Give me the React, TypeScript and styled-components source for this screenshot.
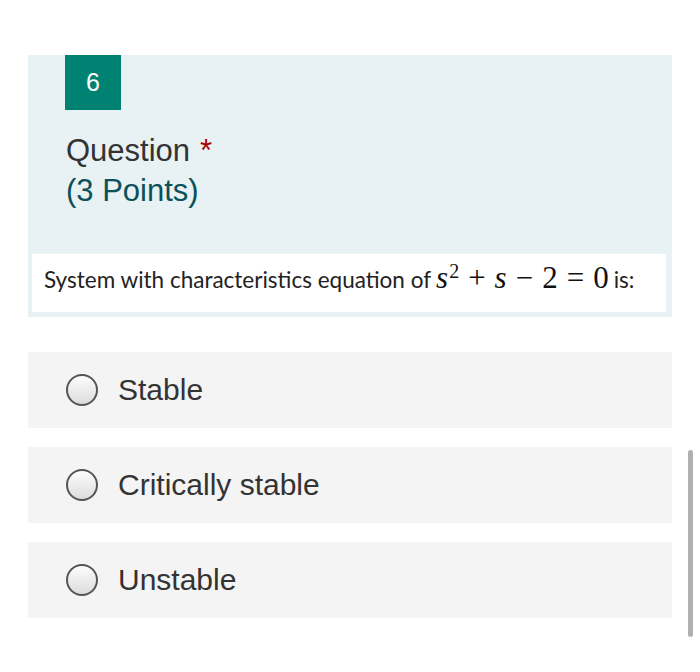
import React from "react";
import styled, { createGlobalStyle } from "styled-components";

const Global = createGlobalStyle`
  html, body { margin: 0; padding: 0; background: #ffffff; }
  body { font-family: "Liberation Sans", Arial, sans-serif; }
`;

const Page = styled.div`
  position: relative;
  width: 700px;
  height: 672px;
  padding: 55px 28px 0 28px;
  box-sizing: border-box;
  display: flex;
  flex-direction: column;
`;

const Header = styled.div`
  background: #e8f1f3;
  display: flex;
  flex-direction: column;
  padding: 0 6px 5px 4px;
`;

const Badge = styled.div`
  width: 56px;
  height: 55px;
  margin-left: 33px;
  background: #008272;
  color: #ffffff;
  font-size: 25px;
  display: flex;
  align-items: center;
  justify-content: center;
`;

const Title = styled.div`
  margin: 21px 0 0 34px;
  font-size: 31px;
  line-height: 40px;
  color: #333333;
`;

const Star = styled.span`
  color: #a80000;
  margin-left: 10px;
`;

const Points = styled.div`
  margin-left: 34px;
  font-size: 31px;
  line-height: 40px;
  color: #0b5159;
`;

const Prompt = styled.div`
  margin-top: 43px;
  height: 58px;
  background: #ffffff;
  display: flex;
  align-items: center;
  padding: 0 0 8px 12px;
  box-sizing: border-box;
  font-family: Lato, "Open Sans", sans-serif;
  font-size: 22.5px;
  color: #222222;
`;

const Math = styled.span`
  font-family: "Liberation Serif", "DejaVu Serif", serif;
  font-size: 31px;
  margin: -3px 5px 0 5px;
  color: #111111;
`;

const Var = styled.i`
  font-style: italic;
`;

const Sup = styled.sup`
  font-size: 20px;
  vertical-align: 10px;
  line-height: 0;
  margin-left: 1px;
`;

const Op = styled.span`
  margin: 0 9px;
`;

const Options = styled.div`
  margin-top: 35px;
  display: flex;
  flex-direction: column;
  gap: 19px;
`;

const Option = styled.label`
  height: 76px;
  background: #f4f4f4;
  display: flex;
  align-items: center;
  padding-left: 38px;
  gap: 20px;
  font-size: 30px;
  color: #333333;
`;

const Radio = styled.span`
  width: 28px;
  height: 28px;
  border-radius: 50%;
  border: 2px solid #555555;
  background: linear-gradient(#fdfdfd, #dcdcdc);
  flex: none;
`;

const Scrollbar = styled.div`
  position: absolute;
  left: 688px;
  top: 450px;
  width: 5px;
  height: 187px;
  border-radius: 3px;
  background: #b0b0b0;
`;

export default function App() {
  const options = ["Stable", "Critically stable", "Unstable"];
  return (
    <>
      <Global />
      <Page>
        <Header>
          <Badge>6</Badge>
          <Title>
            Question<Star>*</Star>
          </Title>
          <Points>(3 Points)</Points>
          <Prompt>
            System with characteristics equation of
            <Math>
              <Var>s</Var>
              <Sup>2</Sup>
              <Op>+</Op>
              <Var>s</Var>
              <Op>−</Op>2<Op>=</Op>0
            </Math>
            is:
          </Prompt>
        </Header>
        <Options>
          {options.map((o) => (
            <Option key={o}>
              <Radio />
              {o}
            </Option>
          ))}
        </Options>
        <Scrollbar />
      </Page>
    </>
  );
}
